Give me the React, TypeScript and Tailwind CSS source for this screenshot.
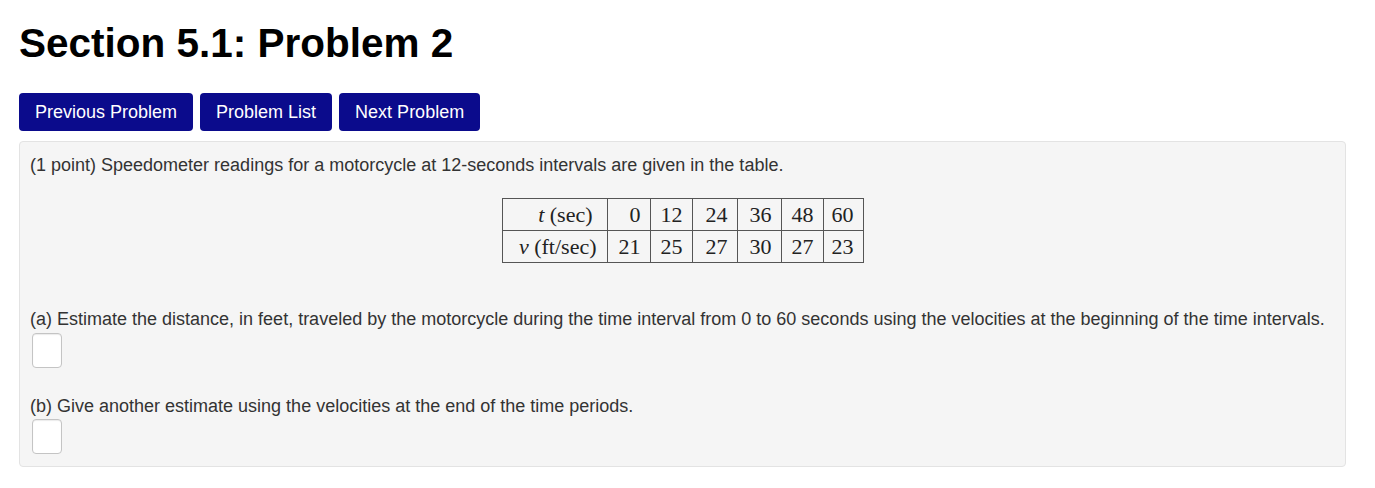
const NAV_BUTTONS = ['Previous Problem', 'Problem List', 'Next Problem'];

const TIMES = ['0', '12', '24', '36', '48', '60'];
const SPEEDS = ['21', '25', '27', '30', '27', '23'];
const COL_WIDTHS = ['w-[43px]', 'w-[42px]', 'w-[45px]', 'w-[44px]', 'w-[42px]', 'w-[40px]'];

function AnswerBox() {
  return (
    <input
      type="text"
      aria-label="answer"
      className="block h-[35px] w-[30px] rounded-[4px] border border-[#c4c4c4] bg-white px-1 text-[16px] shadow-[inset_0_1px_1px_rgba(0,0,0,0.08)] focus:outline-none"
    />
  );
}

export default function App() {
  return (
    <div className="min-h-[488px] bg-white px-[19px] pt-[21px] font-['Liberation_Sans',Arial,sans-serif] text-[#333]">
      <h1 className="text-[40.5px] font-bold leading-[44px] text-black">Section 5.1: Problem 2</h1>

      <div className="mt-[28px] flex gap-[7px]">
        {NAV_BUTTONS.map((label) => (
          <button
            key={label}
            type="button"
            className="h-[38px] rounded-[4px] bg-[#0b0b8c] px-[16px] text-[18px] leading-none text-white"
          >
            {label}
          </button>
        ))}
      </div>

      <div className="mt-[10px] w-[1327px] rounded-[4px] border border-[#e3e3e3] bg-[#f5f5f5] px-[10px] pt-[11px] pb-[12px] text-[18px] leading-[24px]">
        <p>(1 point) Speedometer readings for a motorcycle at 12-seconds intervals are given in the table.</p>

        <div className="mt-[21px] flex justify-center">
          <table className="border-collapse font-['Liberation_Serif','Times_New_Roman',serif] text-[22px] leading-none text-[#222]">
            <tbody>
              <tr className="h-[32px]">
                <td className="w-[105px] border border-[#555] pr-[14px] text-right">
                  <i>t</i> (sec)
                </td>
                {TIMES.map((t, i) => (
                  <td key={i} className={`${COL_WIDTHS[i]} border border-[#555] pr-[9px] text-right`}>
                    {t}
                  </td>
                ))}
              </tr>
              <tr className="h-[32px]">
                <td className="border border-[#555] pr-[10px] text-right">
                  <i>v</i> (ft/sec)
                </td>
                {SPEEDS.map((v, i) => (
                  <td key={i} className="border border-[#555] pr-[9px] text-right">
                    {v}
                  </td>
                ))}
              </tr>
            </tbody>
          </table>
        </div>

        <p className="mt-[44px]">
          (a) Estimate the distance, in feet, traveled by the motorcycle during the time interval from 0 to 60 seconds using the velocities at the beginning of the time intervals.
        </p>
        <div className="mt-[2px] pl-[2px]">
          <AnswerBox />
        </div>

        <p className="mt-[26px]">(b) Give another estimate using the velocities at the end of the time periods.</p>
        <div className="mt-[1px] pl-[2px]">
          <AnswerBox />
        </div>
      </div>
    </div>
  );
}
